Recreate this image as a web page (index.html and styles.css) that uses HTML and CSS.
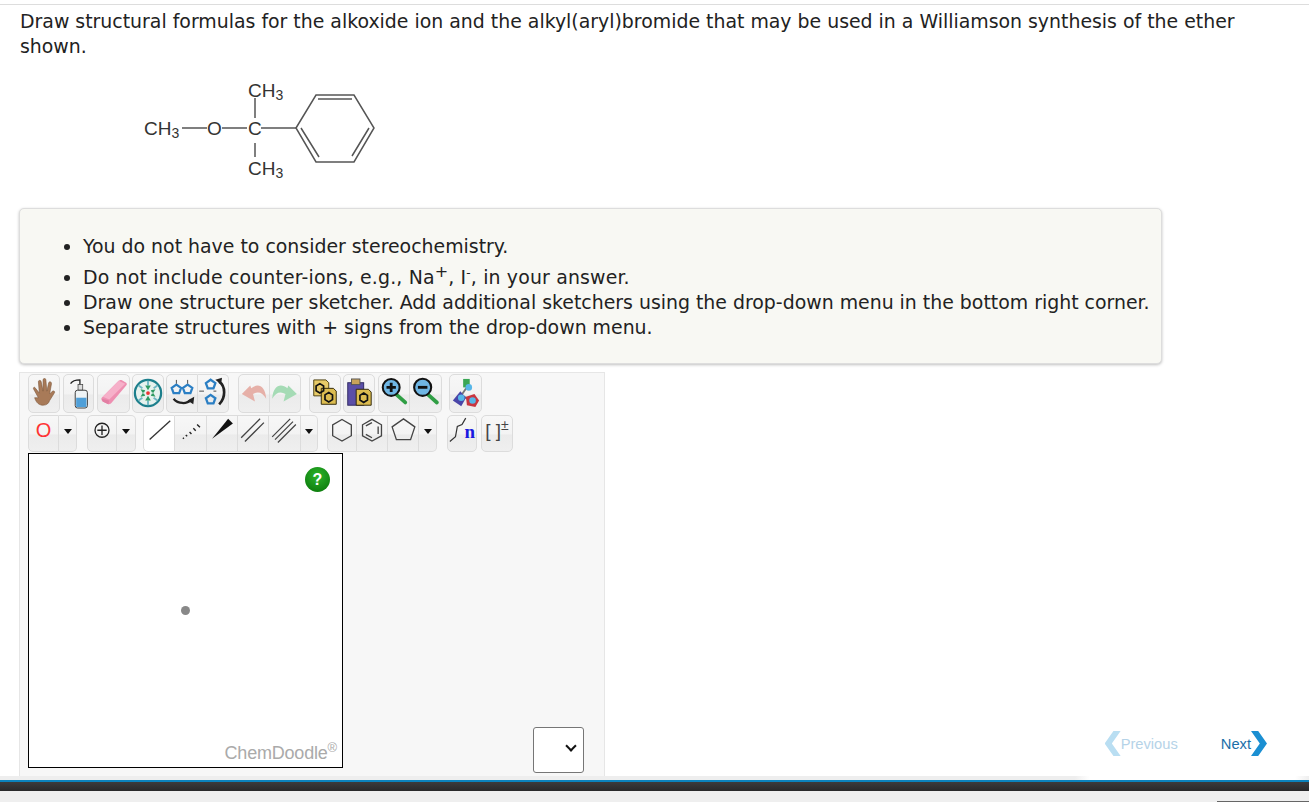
FILE: index.html
```html
<!DOCTYPE html>
<html lang="en">
<head>
  <meta charset="UTF-8" />
  <title>Williamson synthesis question</title>
  <link rel="stylesheet" href="styles.css">
</head>
<body>
  <div class="page">
    <p class="question">Draw structural formulas for the alkoxide ion and the alkyl(aryl)bromide that may be used in a Williamson synthesis of the ether shown.</p>

    <svg class="molecule" viewBox="140 72 240 120" width="240" height="120">
      <g class="mol-text">
        <text x="248" y="97">CH<tspan class="mol-sub" dy="3">3</tspan></text>
        <text x="144" y="135">CH<tspan class="mol-sub" dy="3">3</tspan></text>
        <text x="207" y="135">O</text>
        <text x="248" y="135">C</text>
        <text x="248" y="175">CH<tspan class="mol-sub" dy="3">3</tspan></text>
      </g>
      <g class="mol-bonds">
        <path d="M182 128H207M222 128H247M261 128H296M255 98V118M255 143V157" />
        <path d="M296 128L316 95H354L374 128L354 162H316Z" />
        <path d="M318 99H352M369 128L352 156M301 128L319 157" />
      </g>
    </svg>

    <div class="note">
      <ul>
        <li>You do not have to consider stereochemistry.</li>
        <li class="wide-line">Do not include counter-ions, e.g., Na<sup class="big-sup">+</sup>, I<sup>-</sup>, in your answer.</li>
        <li>Draw one structure per sketcher. Add additional sketchers using the drop-down menu in the bottom right corner.</li>
        <li>Separate structures with + signs from the drop-down menu.</li>
      </ul>
    </div>

    <div class="workspace">
      <div class="sketcher">
        <div class="toolbar row-top">
          <button class="tool t32">
            <svg viewBox="0 0 32 39"><path d="M10 24L5 15c-1-2 1-3 2-1l4 5-1-12c0-2 3-2 3 0l2 10 0-12c0-2 3-2 3 0l1 12 2-9c1-2 3-1 3 1l-2 11 3-3c2-1 3 1 2 2l-5 8c-1 3-3 5-7 5s-7-2-9-8z" fill="#a87a58" stroke="#7a5438" stroke-width=".6"/></svg>
          </button>
          <button class="tool t31 ml3">
            <svg viewBox="0 0 31 39"><path d="M7 9C9 6 13 5 17 5V11" fill="none" stroke="#222" stroke-width="1.400"/><rect x="15" y="10" width="5" height="6" fill="#ddd" stroke="#444" stroke-width=".8"/><rect x="12" y="16" width="13" height="19" rx="2.500" fill="#eef3f5" stroke="#333" stroke-width="1"/><rect x="13" y="24" width="11" height="10" fill="#4f9fd8"/></svg>
          </button>
          <button class="tool t33 ml3">
            <svg viewBox="0 0 33 39"><path d="M4 24L22 6c1-1 2-1 3-1l5 3c1 1 1 2 0 3L14 30c-1 1-2 1-3 1l-6-3c-1-1-2-3-1-4z" fill="#ee8fb1"/><path d="M5 23L22 6l7 3-17 17z" fill="#f6b0c9"/><path d="M4 25l8 2-1 4-6-3z" fill="#e27fa3"/></svg>
          </button>
          <button class="tool t32 ml2">
            <svg viewBox="0 0 32 39"><circle cx="16" cy="19" r="14" fill="#e6f2ee" stroke="#1c7f8c" stroke-width="2.400"/><circle cx="16" cy="19" r="2" fill="#e33"/><path d="M16 6v5M16 27v5M6 11l4 3M26 11l-4 3M6 27l4-3M26 27l-4-3" stroke="#6fb7c4" stroke-width="2"/><path d="M13 11h6l-3 5zM13 27h6l-3-5zM8 15l5 1-2 4zM24 15l-5 1 2 4zM8 23l5-1-2-4zM24 23l-5-1 2-4z" fill="#2f9a62"/></svg>
          </button>
          <div class="tool-group ml2">
            <button class="tool t32">
              <svg viewBox="0 0 32 39"><path d="M10 10l5 3.500-2 5.500H7l-2-5.500zM22 10l5 3.500-2 5.500h-6l-2-5.500z" fill="none" stroke="#2b7fc4" stroke-width="2.400"/><path d="M10 5v4M22 5v4" stroke="#444"/><path d="M7 25c5 6 14 6 19 1" fill="none" stroke="#222" stroke-width="2.400"/><path d="M29 23l-1 8-6-4z" fill="#222"/></svg>
            </button>
            <button class="tool t31">
              <svg viewBox="0 0 31 39"><path d="M13 5l5 3.500-2 5.500h-6L8 8.500zM13 21l5 3.500-2 5.500h-6l-2-5.500z" fill="none" stroke="#2b7fc4" stroke-width="2.400"/><path d="M1 17h5M16 17h3" stroke="#444"/><path d="M22 7c7 5 7 17 0 24" fill="none" stroke="#222" stroke-width="2.800"/><path d="M18 5l7-2-1 7z" fill="#222"/></svg>
            </button>
          </div>
          <div class="tool-group ml9">
            <button class="tool t32">
              <svg viewBox="0 0 32 39"><path d="M3 20L12 11l1 3c7-6 15-3 16 11-4-7-9-8-14-5l2 8z" fill="#e6b0a8"/></svg>
            </button>
            <button class="tool t31">
              <svg viewBox="0 0 31 39"><path d="M28 20L19 11l-1 3C11 8 3 11 2 25c4-7 9-8 14-5l-2 8z" fill="#a5dbb5"/></svg>
            </button>
          </div>
          <button class="tool t32 ml8">
            <svg viewBox="0 0 32 39"><path d="M4 5h13l3 3v14H4z" fill="#e8cb68" stroke="#4a3d0c"/><path d="M12 14h13l3 3v14H12z" fill="#dcbc50" stroke="#2c2406"/><path d="M10.500 9l4 2.500v5l-4 2.500-4-2.500v-5zM20 18.500l4 2.500v5l-4 2.500-4-2.500v-5z" fill="none" stroke="#111" stroke-width="1.800"/></svg>
          </button>
          <button class="tool t32 ml2">
            <svg viewBox="0 0 32 39"><rect x="4" y="8" width="17" height="24" fill="#5b4fa8" stroke="#2e2860"/><rect x="8" y="4" width="9" height="6" fill="#c9a35a" stroke="#555"/><path d="M13 15h13l3 3v14H13z" fill="#dcbc50" stroke="#2c2406"/><path d="M21 19l4 2.500v5L21 29l-4-2.500v-5z" fill="none" stroke="#111" stroke-width="1.800"/></svg>
          </button>
          <div class="tool-group ml3">
            <button class="tool t32">
              <svg viewBox="0 0 32 39"><path d="M19 21l9 8" stroke="#2f9e44" stroke-width="4" stroke-linecap="round"/><circle cx="13" cy="13" r="9" fill="#6fb6e4" stroke="#111" stroke-width="2.200"/><path d="M8 13h10M13 8v10" stroke="#111" stroke-width="3"/></svg>
            </button>
            <button class="tool t32">
              <svg viewBox="0 0 32 39"><path d="M19 21l9 8" stroke="#2f9e44" stroke-width="4" stroke-linecap="round"/><circle cx="13" cy="13" r="9" fill="#6fb6e4" stroke="#111" stroke-width="2.200"/><path d="M8 13h10" stroke="#111" stroke-width="3"/></svg>
            </button>
          </div>
          <button class="tool t33 ml7">
            <svg viewBox="0 0 33 39"><path d="M13 20L20 10M12 21l11 7" stroke="#777" stroke-width="2"/><rect x="14" y="4" width="7" height="9" fill="#3aa655"/><path d="M3 27l8-10 6 7-5 9z" fill="#4a45a8"/><path d="M17 23l9-3 5 7-4 7-9-2z" fill="#c9353f"/><circle cx="20" cy="13" r="3.500" fill="#56b6e8"/><circle cx="12" cy="24" r="3.500" fill="#56b6e8"/><circle cx="24" cy="27" r="3.500" fill="#56b6e8"/></svg>
          </button>
        </div>

        <div class="toolbar row-bottom">
          <div class="tool-group">
            <button class="tool t31 atom">O</button>
            <button class="tool t18"><span class="caret"></span></button>
          </div>
          <div class="tool-group ml10">
            <button class="tool t30">
              <svg viewBox="0 0 30 37"><circle cx="15" cy="15" r="7.500" fill="none" stroke="#222" stroke-width="1.400"/><path d="M15 10v10M10 15h10" stroke="#222" stroke-width="1.400"/></svg>
            </button>
            <button class="tool t19"><span class="caret"></span></button>
          </div>
          <div class="tool-group ml7">
            <button class="tool t32 active">
              <svg viewBox="0 0 32 37"><path d="M6 25L28 5" stroke="#333" stroke-width="1.400"/></svg>
            </button>
            <button class="tool t32">
              <svg viewBox="0 0 32 37"><path d="M8 23l1 1M11 20l1.500 1.500M15 17l2 2M19 13l2.500 2.500M23 9l3 3" stroke="#222" stroke-width="1.500"/></svg>
            </button>
            <button class="tool t31">
              <svg viewBox="0 0 31 37"><path d="M5 24L22 3l5 5z" fill="#111"/></svg>
            </button>
            <button class="tool t31">
              <svg viewBox="0 0 31 37"><path d="M3 23L23 3M7 27L27 7" stroke="#444" stroke-width="1.400"/></svg>
            </button>
            <button class="tool t32">
              <svg viewBox="0 0 32 37"><path d="M3 22L22 3M6 25L25 6M9 28L28 9" stroke="#444" stroke-width="1.300"/></svg>
            </button>
            <button class="tool t17"><span class="caret"></span></button>
          </div>
          <div class="tool-group ml9">
            <button class="tool t30">
              <svg viewBox="0 0 30 37"><path d="M15 3.500l10 5.800v11.600L15 26.500 5 20.900V9.300z" fill="none" stroke="#444" stroke-width="1.400"/></svg>
            </button>
            <button class="tool t31">
              <svg viewBox="0 0 31 37"><path d="M15.500 3.500l10 5.800v11.600l-10 5.600-10-5.600V9.300z" fill="none" stroke="#444" stroke-width="1.400"/><path d="M9 10.500l6.500-3.500M22 11v8M9 19.500l6.500 3.500" fill="none" stroke="#444" stroke-width="1.400"/></svg>
            </button>
            <button class="tool t31">
              <svg viewBox="0 0 31 37"><path d="M16 3l12 8.500L23.500 25h-15L4 11.500z" fill="none" stroke="#444" stroke-width="1.400"/></svg>
            </button>
            <button class="tool t18"><span class="caret"></span></button>
          </div>
          <button class="tool t30 ml10 sgroup">
            <svg viewBox="0 0 30 37"><path d="M2 27l6-5 2-11 5-2 4-7" fill="none" stroke="#333" stroke-width="1.300"/></svg>
            <span class="sgroup-n">n</span>
          </button>
          <button class="tool t32 ml4 bracket">[ ]<sup>±</sup></button>
        </div>

        <div class="sketch-area">
          <div class="canvas">
            <span class="help">?</span>
            <span class="dot"></span>
            <span class="brand">ChemDoodle<sup>®</sup></span>
          </div>
          <div class="add-menu">
            <select></select>
            <span class="menu-arrow"></span>
          </div>
        </div>
      </div>

      <div class="pager">
        <a class="pager-link prev"><span class="chev chev-left"></span>Previous</a>
        <a class="pager-link next">Next<span class="chev chev-right"></span></a>
      </div>
    </div>
  </div>

  <div class="footer">
    <div class="footer-shade"></div>
    <div class="footer-bar"></div>
    <div class="footer-bottom"><span class="footer-tab"></span></div>
  </div>
</body>
</html>
```

FILE: styles.css
```css
* {
  box-sizing: border-box;
}

html, body {
  margin: 0;
  padding: 0;
}

body {
  width: 1309px;
  height: 802px;
  overflow: hidden;
  background: #fff;
  font-family: "DejaVu Sans", Verdana, sans-serif;
  color: #222;
  display: flex;
  flex-direction: column;
}

.page {
  height: 776px;
  margin-top: 4px;
  border-top: 1px solid #ddd;
  padding: 4px 0 0 19px;
  display: flex;
  flex-direction: column;
}

.question {
  margin: 0 73px 0 1px;
  font-size: 18.9px;
  line-height: 25px;
}

.molecule {
  display: block;
  margin: 13px 0 16px 121px;
  flex: none;
}

.mol-text {
  font-family: "Liberation Sans", Arial, sans-serif;
  font-size: 19px;
  fill: #333;
}

.mol-sub {
  font-size: 14px;
}

.mol-bonds path {
  fill: none;
  stroke: #555;
  stroke-width: 1.5;
}

/* instructions box */
.note {
  width: 1143px;
  height: 156px;
  flex: none;
  background: #f8f8f3;
  border: 1px solid #ddd;
  border-radius: 5px;
  box-shadow: 0 1px 3px rgba(0, 0, 0, 0.25);
  padding: 25px 0 0 0;
  font-size: 18.9px;
  line-height: 25px;
}

.note ul {
  margin: 0;
  padding-left: 63px;
}

.note sup {
  font-size: 12px;
  line-height: 0;
}

.note .big-sup {
  font-size: 16px;
}

.note li:first-child {
  margin-bottom: 6px;
}

.note .wide-line {
  letter-spacing: 0.16px;
}

/* sketcher */
.workspace {
  display: flex;
  margin-top: 8px;
  flex: 1;
  min-height: 0;
}

.sketcher {
  width: 586px;
  background: #f7f7f7;
  border: 1px solid #e6e6e6;
  border-bottom: none;
  padding: 1px 0 0 8px;
  display: flex;
  flex-direction: column;
}

.toolbar {
  display: flex;
}

.row-top {
  height: 39px;
  margin-bottom: 2px;
}

.row-bottom {
  height: 37px;
  margin-bottom: 1px;
}

.tool-group {
  display: flex;
}

.tool-group .tool {
  border-radius: 0;
  border-left: none;
}

.tool-group .tool:first-child {
  border-left: 1px solid #dcdcdc;
  border-radius: 5px 0 0 5px;
}

.tool-group .tool:last-child {
  border-radius: 0 5px 5px 0;
}

.tool {
  display: block;
  height: 100%;
  padding: 0;
  border: 1px solid #dcdcdc;
  border-radius: 5px;
  background: linear-gradient(#f7f7f7 0%, #f3f3f3 50%, #ebebeb 55%, #efefef 100%);
  position: relative;
}

.tool svg {
  display: block;
  width: 100%;
  height: 100%;
}

.tool.active {
  background: #fff;
}

.t17 { width: 17px; }
.t18 { width: 18px; }
.t19 { width: 19px; }
.t30 { width: 30px; }
.t31 { width: 31px; }
.t32 { width: 32px; }
.t33 { width: 33px; }

.ml2 { margin-left: 2px; }
.ml3 { margin-left: 3px; }
.ml4 { margin-left: 4px; }
.ml7 { margin-left: 7px; }
.ml8 { margin-left: 8px; }
.ml9 { margin-left: 9px; }
.ml10 { margin-left: 10px; }

.caret {
  display: block;
  margin: -5px auto 0;
  width: 0;
  height: 0;
  border-left: 4px solid transparent;
  border-right: 4px solid transparent;
  border-top: 5px solid #111;
}

.atom {
  font-family: "Liberation Sans", Arial, sans-serif;
  font-size: 20px;
  color: #f33;
  padding-bottom: 6px;
}

.sgroup-n {
  position: absolute;
  right: 1px;
  bottom: 10px;
  font-family: "Liberation Serif", serif;
  font-size: 19px;
  font-weight: 700;
  color: #1a1ae0;
  line-height: 1;
}

.bracket {
  font-family: "Liberation Sans", Arial, sans-serif;
  font-size: 19px;
  color: #444;
  white-space: nowrap;
  padding-bottom: 6px;
}

.bracket sup {
  font-size: 14px;
  line-height: 0;
}

.sketch-area {
  display: flex;
  align-items: flex-end;
}

.canvas {
  width: 315px;
  height: 315px;
  flex: none;
  background: #fff;
  border: 1px solid #000;
  position: relative;
}

.help {
  position: absolute;
  left: 276px;
  top: 13px;
  width: 25px;
  height: 25px;
  border-radius: 50%;
  background: radial-gradient(circle at 50% 35%, #2cb52c, #067006);
  color: #fff;
  font-family: "Liberation Sans", Arial, sans-serif;
  font-size: 16px;
  font-weight: 700;
  line-height: 25px;
  text-align: center;
}

.dot {
  position: absolute;
  left: 152px;
  top: 152px;
  width: 9px;
  height: 9px;
  border-radius: 50%;
  background: #888;
}

.brand {
  position: absolute;
  right: 5px;
  bottom: 3px;
  font-family: "Liberation Sans", Arial, sans-serif;
  font-size: 18px;
  letter-spacing: -0.2px;
  color: #aaa;
  line-height: 22px;
}

.brand sup {
  font-size: 13px;
  line-height: 0;
}

.add-menu {
  width: 51px;
  height: 46px;
  margin: 0 0 -5px 190px;
  position: relative;
}

.add-menu select {
  display: block;
  width: 100%;
  height: 100%;
  appearance: none;
  background: #fff;
  border: 1px solid #767676;
  border-radius: 3px;
}

.menu-arrow {
  position: absolute;
  left: 34px;
  top: 15px;
  width: 8px;
  height: 8px;
  border-right: 2.5px solid #111;
  border-bottom: 2.5px solid #111;
  transform: rotate(45deg);
}

/* previous / next */
.pager {
  margin-left: auto;
  margin-right: 42px;
  padding-bottom: 20px;
  display: flex;
  align-items: flex-end;
  gap: 43px;
  font-family: "Liberation Sans", Arial, sans-serif;
  font-size: 14.7px;
}

.pager-link {
  display: flex;
  align-items: center;
}

.prev {
  color: #b5d3e8;
}

.next {
  color: #1a6ea8;
}

.chev {
  display: block;
  width: 16px;
  height: 25px;
  background: #1b8fd2;
}

.chev-left {
  background: #b9def2;
  clip-path: polygon(55% 0, 100% 0, 45% 50%, 100% 100%, 55% 100%, 0 50%);
}

.chev-right {
  clip-path: polygon(0 0, 45% 0, 100% 50%, 45% 100%, 0 100%, 55% 50%);
}

/* bottom bars */
.footer {
  flex: none;
}

.footer-shade {
  height: 4px;
  background: linear-gradient(90deg, #eee 0, #eee 1075px, #fff 1090px, #fff 1295px, #eee 1309px);
}

.footer-bar {
  height: 11px;
  background: linear-gradient(#3b3b3d, #28282a);
  border-top: 2px solid #0b82bd;
}

.footer-bottom {
  height: 11px;
  background: #efefef;
  display: flex;
  justify-content: flex-end;
  align-items: flex-end;
}

.footer-tab {
  width: 92px;
  height: 1px;
  background: #666;
}
```
